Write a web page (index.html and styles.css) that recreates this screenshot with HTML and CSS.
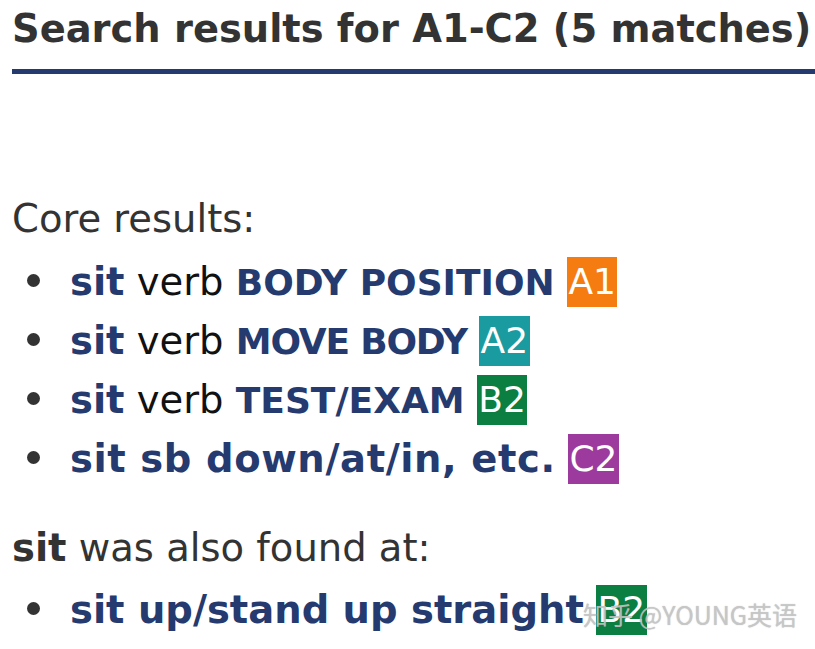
FILE: index.html
```html
<!DOCTYPE html>
<html lang="en">
<head>
<meta charset="utf-8">
<title>Search results</title>
<link rel="stylesheet" href="styles.css">
</head>
<body>
<div class="page">
  <h1 class="title">Search results for A1-C2 (5 matches)</h1>
  <p class="section">Core results:</p>
  <ul class="results">
    <li><span class="hw">sit</span> <span class="pos">verb</span> <span class="sense">BODY POSITION</span> <span class="lvl a1">A1</span></li>
    <li><span class="hw">sit</span> <span class="pos">verb</span> <span class="sense tight">MOVE BODY</span> <span class="lvl a2">A2</span></li>
    <li><span class="hw">sit</span> <span class="pos">verb</span> <span class="sense">TEST/EXAM</span> <span class="lvl b2">B2</span></li>
    <li><span class="hw wide">sit sb down/at/in, etc.</span> <span class="lvl c2">C2</span></li>
  </ul>
  <p class="section also"><b>sit</b> was also found at:</p>
  <ul class="results">
    <li><span class="hw">sit up/stand up straight</span> <span class="lvl b2">B2</span></li>
  </ul>
</div>
<div class="watermark">知乎 @YOUNG英语</div>
</body>
</html>
```
FILE: styles.css
```css
html, body {
  margin: 0;
  padding: 0;
  background: #fff;
}
body {
  font-family: "DejaVu Sans", Verdana, sans-serif;
  font-size: 38.5px;
  color: #333;
  line-height: 58px;
  position: relative;
  width: 815px;
  height: 649px;
  overflow: hidden;
}
.page {
  padding-left: 12px;
}
.title {
  margin: 0;
  padding-top: 3px;
  padding-bottom: 14px;
  font-size: 38.4px;
  font-weight: bold;
  line-height: 52px;
  color: #333;
  border-bottom: 5px solid #253a6e;
  white-space: nowrap;
}
.section {
  margin: 116px 0 5px 0;
}
.section.also {
  margin: 31px 0 4px 0;
}
.section b {
  font-weight: bold;
  color: #333;
}
.results {
  margin: 0;
  padding-left: 15px;
  list-style: none;
}
.results li {
  white-space: nowrap;
}
.results li::before {
  content: "";
  display: inline-block;
  width: 13px;
  height: 13px;
  border-radius: 50%;
  background: #333;
  margin-right: 30px;
  vertical-align: 8px;
}
.hw {
  font-weight: bold;
  color: #253a6e;
}
.hw.wide {
  letter-spacing: 0.6px;
}
.pos {
  color: #111;
}
.sense {
  font-weight: bold;
  color: #253a6e;
  font-size: 36px;
}
.sense.tight {
  letter-spacing: -1.2px;
}
.lvl {
  display: inline-block;
  font-size: 36px;
  line-height: 50px;
  height: 50px;
  padding: 0 1.5px;
  color: #fff;
  vertical-align: 1px;
}
.a1 { background: #f47c10; }
.a2 { background: #1a9ba0; }
.b2 { background: #0a7f41; }
.c2 { background: #9c3a9e; }
.watermark {
  position: absolute;
  left: 583px;
  top: 596px;
  font-family: "Noto Sans CJK SC", "DejaVu Sans", sans-serif;
  font-size: 25px;
  line-height: 36px;
  color: rgba(200, 200, 200, 0.85);
  text-shadow: 0 0 1px rgba(120,120,120,0.5);
  white-space: nowrap;
}
```
